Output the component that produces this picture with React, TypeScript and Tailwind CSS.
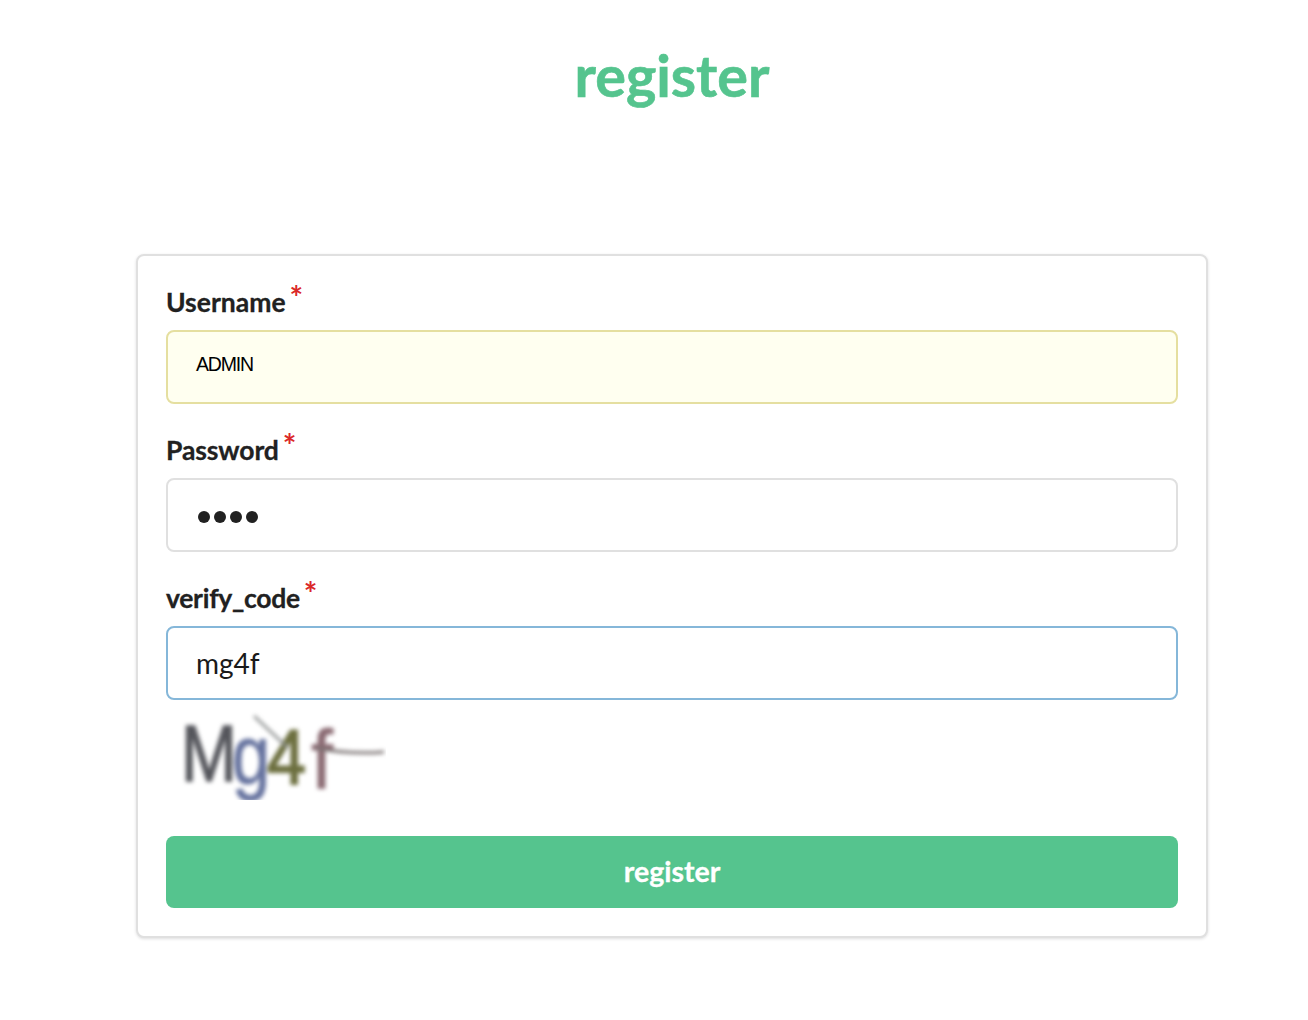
export default function App() {
  const labelCls = "flex items-start h-[46px] text-[26.5px] leading-[36px] font-bold text-[#212121] [-webkit-text-stroke:0.3px_#212121]";
  const star = <span className="ml-[4px] text-[#db2828] text-[32px] leading-[28px] font-bold [-webkit-text-stroke:0] mt-0">*</span>;
  const inputCls = "h-[74px] w-full rounded-[8px] border-2 flex items-center pl-[28px]";
  const dot = <span className="w-[12px] h-[12px] rounded-full bg-[#212121]" />;
  return (
    <div className="w-[1308px] h-[1020px] bg-white font-['Lato',sans-serif] flex flex-col">
      <h1 className="mt-[39px] ml-[136px] w-[1072px] text-center text-[57.5px] leading-[72px] font-bold text-[#55c48e] [-webkit-text-stroke:0.6px_#55c48e]">register</h1>
      <div className="mt-[143px] ml-[136px] w-[1072px] h-[684px] rounded-[8px] bg-white border-2 border-[#e0e0e0] shadow-[0_1px_3px_rgba(34,36,38,0.15)] px-[28px] pt-[28px] flex flex-col">
        <div className={labelCls}>Username{star}</div>
        <div className={inputCls + " border-[#e5dfa0] bg-[#fffff0] pb-[4px] text-[19.5px] text-black font-['Liberation_Sans',sans-serif] tracking-[-1.2px]"}>ADMIN</div>
        <div className={labelCls + " mt-[28px] tracking-[-0.1px]"}>Password{star}</div>
        <div className={inputCls + " border-[#e0e0e0] bg-white gap-[4px] pl-[30px] pt-[4px]"}>
          {dot}{dot}{dot}{dot}
        </div>
        <div className={labelCls + " mt-[28px] tracking-[-0.3px]"}>verify_code{star}</div>
        <div className={inputCls + " border-[#85b7d9] bg-white text-[28px] text-[#1a1a1a]"}>mg4f</div>
        <div className="w-[220px] h-[100px] shrink-0 overflow-hidden">
          <svg viewBox="0 0 220 100" className="w-[220px] h-[100px] overflow-visible blur-[2px]" aria-label="Mg4f">
            <text x="15" y="81" fontFamily="Liberation Sans, sans-serif" fontSize="80" textLength="56" lengthAdjust="spacingAndGlyphs" fill="#55565c" stroke="#55565c" strokeWidth="1.5">M</text>
            <text x="66" y="84" fontFamily="Liberation Sans, sans-serif" fontSize="84" textLength="38" lengthAdjust="spacingAndGlyphs" fill="#66739f" stroke="#66739f" strokeWidth="1">g</text>
            <text x="101" y="84" fontFamily="Liberation Sans, sans-serif" fontSize="78" textLength="39" lengthAdjust="spacingAndGlyphs" fill="#6d7040" stroke="#6d7040" strokeWidth="2">4</text>
            <text x="145" y="89" fontFamily="Liberation Sans, sans-serif" fontSize="84" textLength="22" lengthAdjust="spacingAndGlyphs" fill="#8a6a72" stroke="#8a6a72" strokeWidth="0.8">f</text>
            <path d="M88 16 L122 48" stroke="#8d9090" strokeWidth="2.5" fill="none" />
            <path d="M150 48 C175 53 195 54 218 52" stroke="#7d7575" strokeWidth="3" fill="none" />
          </svg>
        </div>
        <button className="mt-[36px] h-[72px] w-full rounded-[8px] bg-[#55c48e] text-white text-[28.5px] pb-[2px] font-bold [-webkit-text-stroke:0.3px_#ffffff]">register</button>
      </div>
    </div>
  );
}
